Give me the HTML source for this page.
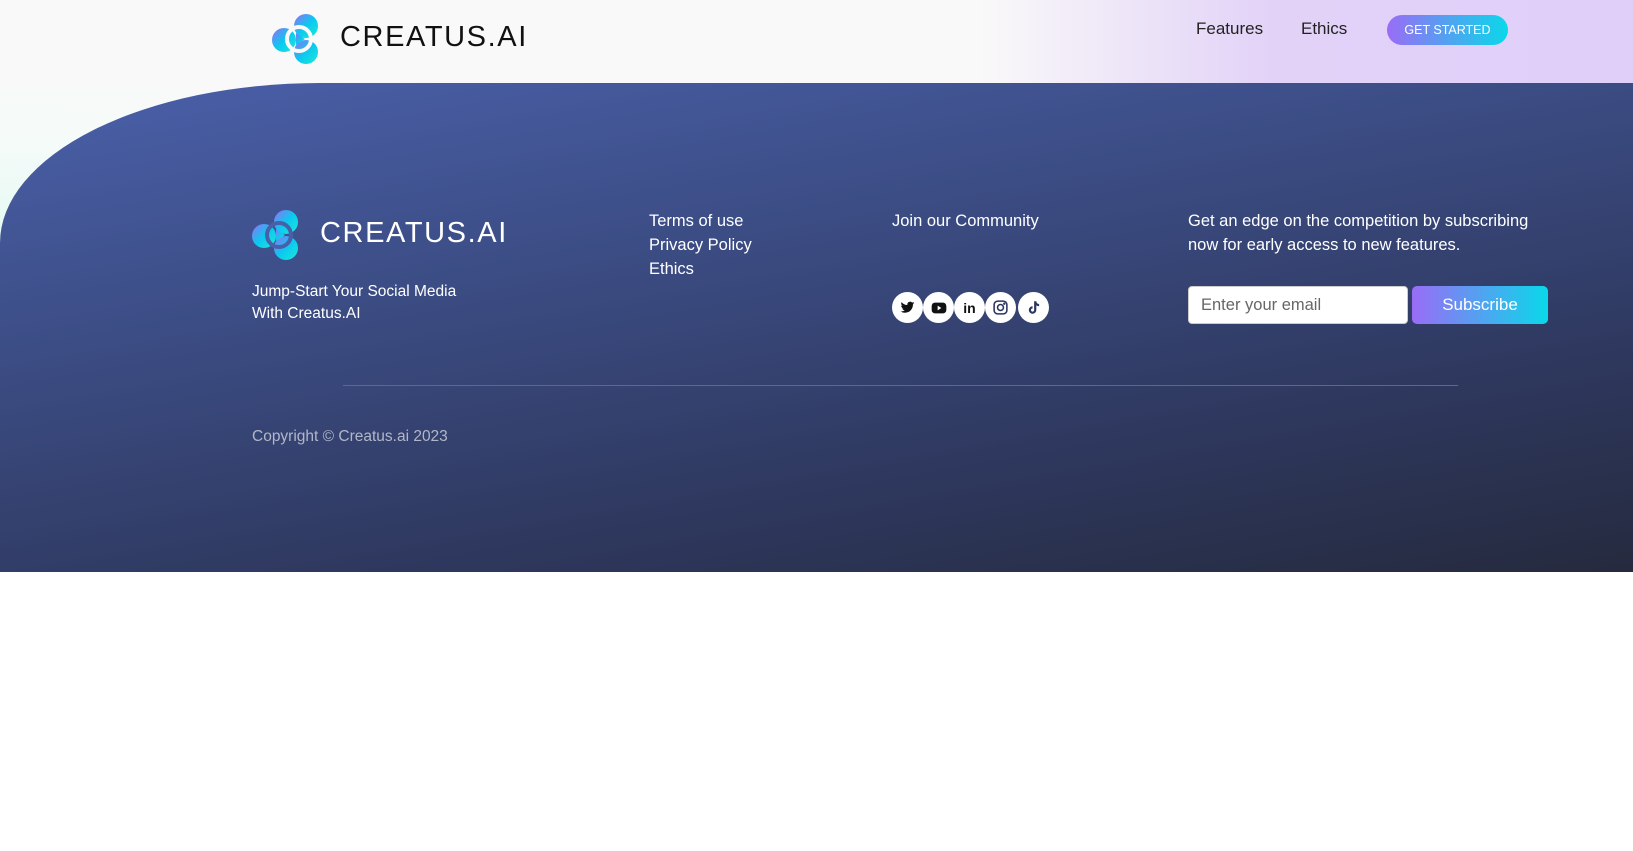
<!DOCTYPE html>
<html><head><meta charset="utf-8"><style>
*{margin:0;padding:0;box-sizing:border-box}
body{width:1633px;height:851px;background:#fff;font-family:"Liberation Sans",sans-serif;position:relative;overflow:hidden}
.top{position:absolute;left:0;top:0;width:1633px;height:300px;background:linear-gradient(90deg,#f9f9f9 0,#f9f9f9 60%,#e2d2f8 78%,#e0cff9 100%)}
.mint{position:absolute;left:0;top:83px;width:400px;height:200px;background:radial-gradient(ellipse at 0% 100%,#dff8f0 0,#f5fbf9 50%,#f9f9f9 80%)}
.foot{position:absolute;left:0;top:83px;width:1633px;height:489px;background:linear-gradient(170deg,#4a60aa 0%,#3c4d85 35%,#2f3960 70%,#252a3e 100%);border-top-left-radius:320px 160px}
.nav{position:absolute;top:19px;font-size:17px;color:#222}
.btn{position:absolute;left:1387px;top:15px;width:121px;height:30px;border-radius:15px;background:linear-gradient(90deg,#9a6cf6,#0ad8ea);color:#fff;font-size:12.5px;text-align:center;line-height:30px}
.w{position:absolute;color:#fff;font-size:16.5px;line-height:24px}
.logo{position:absolute;font-size:29px;letter-spacing:1.6px}
.ic{position:absolute;top:292px;width:31px;height:31px;border-radius:50%;background:#fff;display:flex;align-items:center;justify-content:center}
</style></head><body>
<div class="top"></div><div class="mint"></div>
<div class="foot"></div>
<svg style="position:absolute;left:272px;top:12px" width="52" height="52" viewBox="0 0 52 52"><defs><linearGradient id="g" x1="0" y1="0" x2="1" y2="1"><stop offset="0" stop-color="#9b6cf6"/><stop offset=".5" stop-color="#0bc8f0"/><stop offset="1" stop-color="#1de9d8"/></linearGradient></defs><circle cx="34" cy="14" r="12" fill="url(#g)"/><circle cx="12" cy="28" r="12" fill="url(#g)"/><circle cx="34" cy="40" r="12" fill="url(#g)"/><circle cx="27" cy="27" r="12" fill="none" stroke="#f9f9f9" stroke-width="4"/><path d="M24 21l9 6-9 6z" fill="url(#g)"/></svg>
<div class="logo" style="left:340px;top:21px;color:#111">CREATUS.AI</div>
<div class="nav" style="left:1196px">Features</div>
<div class="nav" style="left:1301px">Ethics</div>
<div class="btn">GET STARTED</div>
<svg style="position:absolute;left:252px;top:208px" width="52" height="52" viewBox="0 0 52 52"><circle cx="34" cy="14" r="12" fill="url(#g)"/><circle cx="12" cy="28" r="12" fill="url(#g)"/><circle cx="34" cy="40" r="12" fill="url(#g)"/><circle cx="27" cy="27" r="12" fill="none" stroke="#4760a8" stroke-width="4"/><path d="M24 21l9 6-9 6z" fill="url(#g)"/></svg>
<div class="logo" style="left:320px;top:217px;color:#fff">CREATUS.AI</div>
<div class="w" style="left:252px;top:281px;font-size:15.5px;line-height:22px">Jump-Start Your Social Media<br>With Creatus.AI</div>
<div class="w" style="left:649px;top:209px">Terms of use<br>Privacy Policy<br>Ethics</div>
<div class="w" style="left:892px;top:209px">Join our Community</div>
<div class="w" style="left:1188px;top:209px">Get an edge on the competition by subscribing<br>now for early access to new features.</div>
<div style="position:absolute;left:1188px;top:286px;width:220px;height:38px;background:#fff;border-radius:4px;border:1px solid #ccc;color:#666;font-size:16.5px;padding:9px 12px">Enter your email</div>
<div style="position:absolute;left:1412px;top:286px;width:136px;height:38px;border-radius:5px;background:linear-gradient(90deg,#9a6cf6,#0ad8ea);color:#fff;font-size:17px;text-align:center;line-height:38px">Subscribe</div>
<div class="ic" style="left:892px"><svg width="15" height="15" viewBox="0 0 24 24"><path fill="#111" d="M23 5a9 9 0 0 1-2.6.7A4.5 4.5 0 0 0 22.4 3a9 9 0 0 1-2.9 1.1A4.5 4.5 0 0 0 11.8 8 12.8 12.8 0 0 1 2.5 3.3a4.5 4.5 0 0 0 1.4 6 4.5 4.5 0 0 1-2-.6 4.5 4.5 0 0 0 3.6 4.5 4.5 4.5 0 0 1-2 .1 4.5 4.5 0 0 0 4.2 3.1A9 9 0 0 1 1 18.3 12.8 12.8 0 0 0 7.9 20.3c8.3 0 12.8-6.9 12.8-12.8v-.6A9 9 0 0 0 23 5z"/></svg></div>
<div class="ic" style="left:923px"><svg width="16" height="16" viewBox="0 0 24 24"><rect x="1" y="4" width="22" height="16" rx="5" fill="#111"/><path d="M10 8.5l5.5 3.5-5.5 3.5z" fill="#fff"/></svg></div>
<div class="ic" style="left:954px;font-weight:bold;font-size:14px;color:#111">in</div>
<div class="ic" style="left:985px"><svg width="17" height="17" viewBox="0 0 24 24" fill="none" stroke="#2b3560" stroke-width="2.2"><rect x="3" y="3" width="18" height="18" rx="5"/><circle cx="12" cy="12" r="4.2"/><circle cx="17.3" cy="6.7" r=".6" fill="#2b3560"/></svg></div>
<div class="ic" style="left:1018px"><svg width="15" height="15" viewBox="0 0 24 24"><path fill="#2b3560" d="M13 2h3.5a5 5 0 0 0 4.5 4.5V10a8 8 0 0 1-4.5-1.5V16a6 6 0 1 1-6-6v3.5a2.5 2.5 0 1 0 2.5 2.5z"/></svg></div>
<div style="position:absolute;left:343px;top:385px;width:1115px;height:1px;background:#5c6890"></div>
<div class="w" style="left:252px;top:425px;color:#b2b7c8;font-size:15.5px">Copyright © Creatus.ai 2023</div>
</body></html>
